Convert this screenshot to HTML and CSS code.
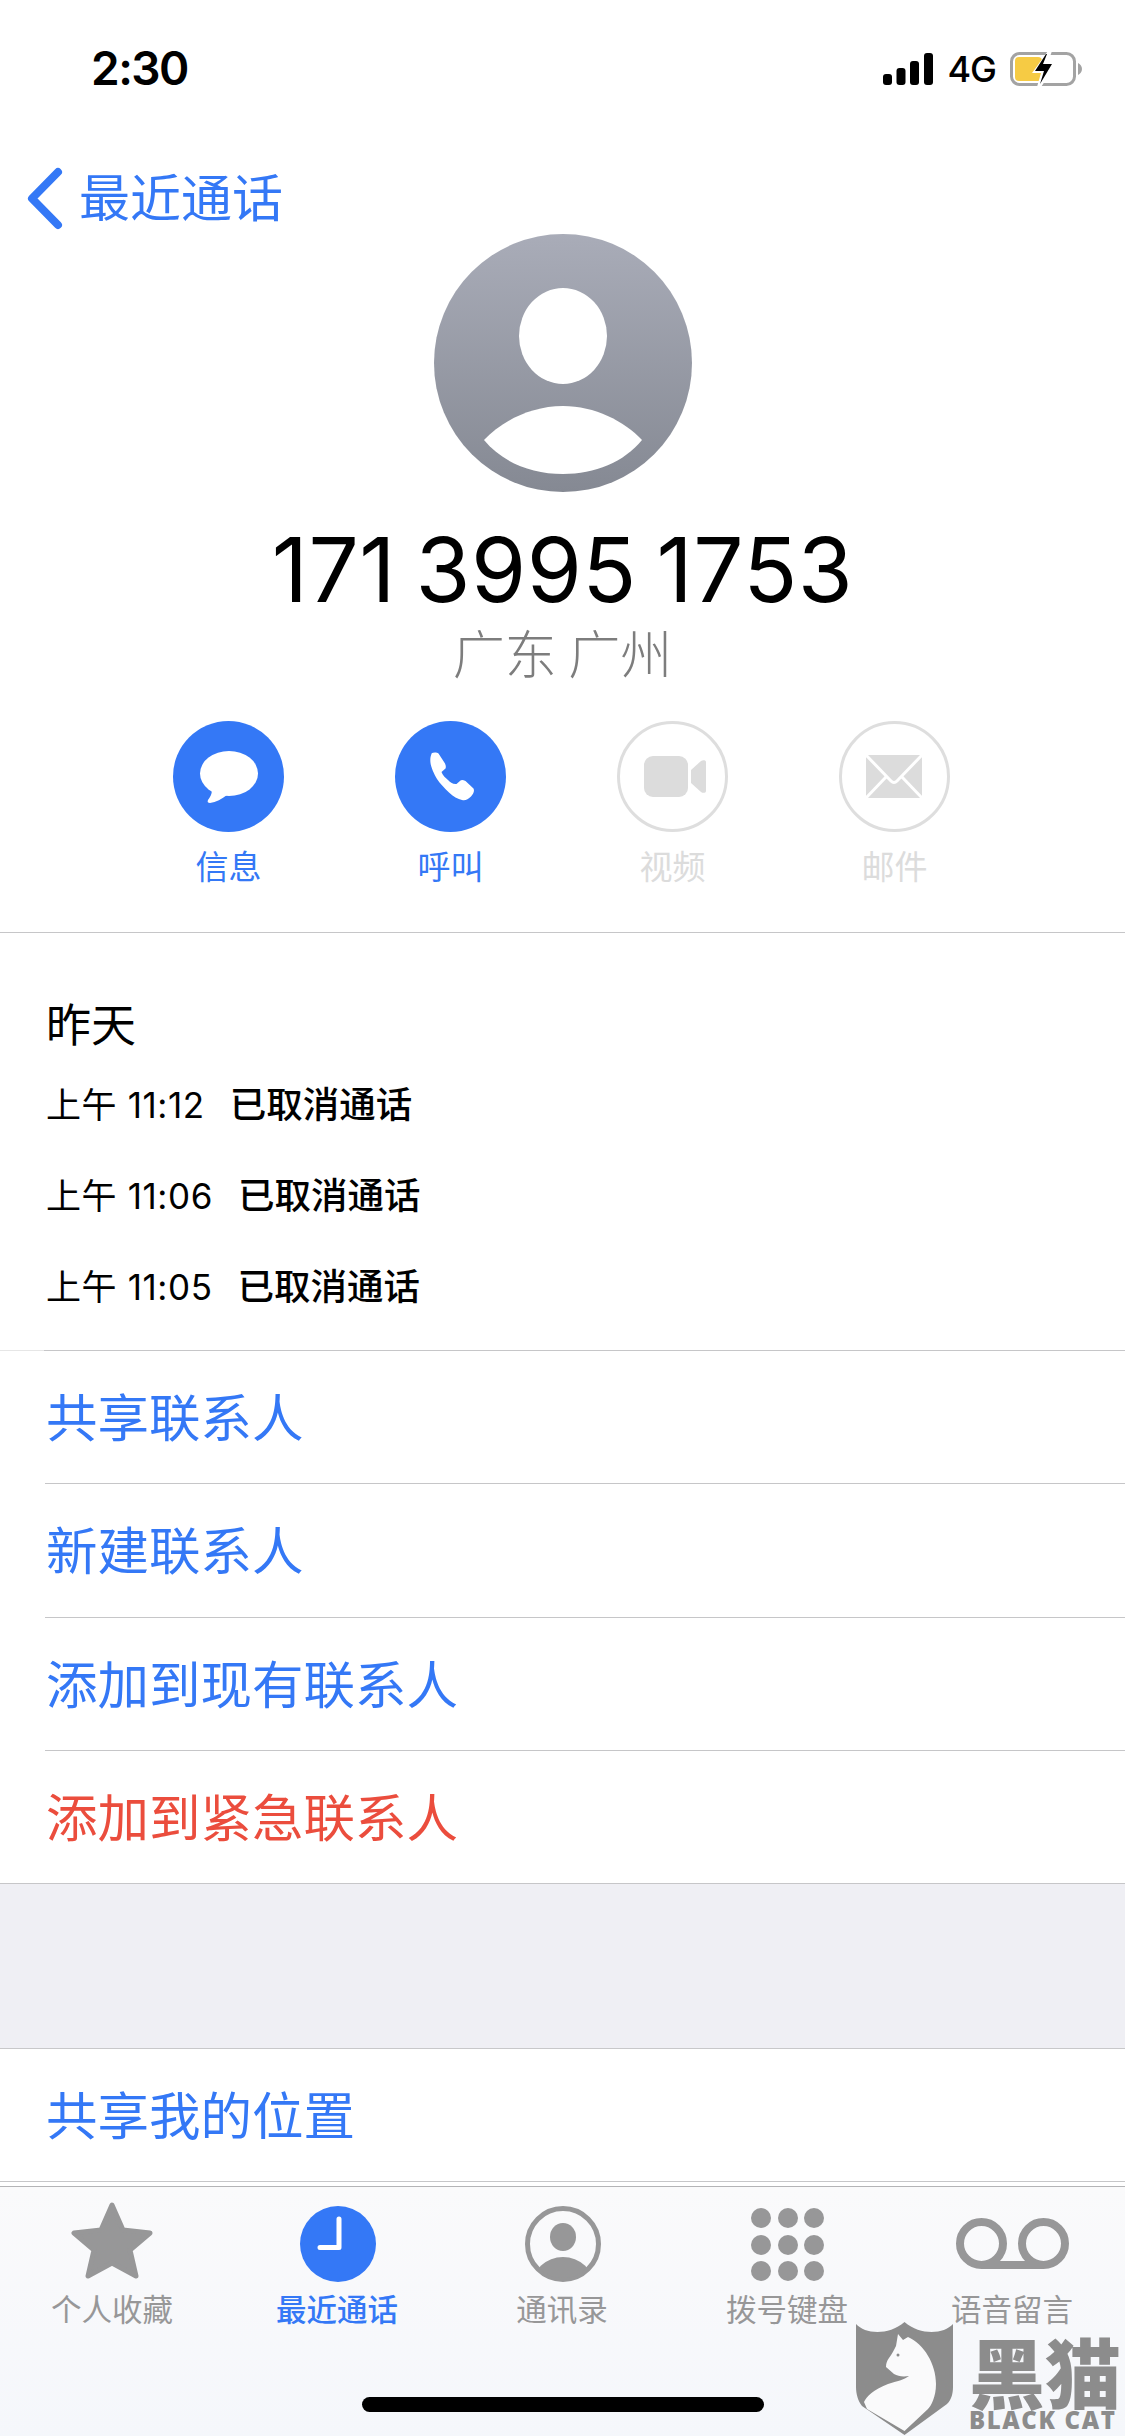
FILE: index.html
```html
<!DOCTYPE html>
<html lang="zh-CN">
<head>
    <meta charset="UTF-8">
    <meta name="viewport" content="width=device-width, initial-scale=1.0">
    <title>最近通话</title>
    <link rel="stylesheet" href="styles.css">
</head>
<body>
    <div class="phone">
        <div class="status">
            <span class="time">2:30</span>
            <div class="status-right">
                <svg class="signal" width="50" height="32" viewBox="0 0 50 32">
                    <rect x="0" y="21" width="9" height="11" rx="3"/>
                    <rect x="13.5" y="15" width="9" height="17" rx="3"/>
                    <rect x="27" y="8" width="9" height="24" rx="3"/>
                    <rect x="41" y="0" width="9" height="32" rx="3"/>
                </svg>
                <span class="net">4G</span>
                <svg class="battery" width="72" height="34" viewBox="0 0 72 34">
                    <rect x="1.5" y="1.5" width="63" height="31" rx="8" fill="none" stroke="#a3a3a3" stroke-width="3"/>
                    <rect x="5" y="5" width="27" height="24" rx="4" fill="#f6cb44"/>
                    <path d="M68 11c2 1 4 3 4 6s-2 5-4 6z" fill="#a3a3a3"/>
                    <path d="M38 -1L22 21h9l-4 14h4l15-22h-9l5-14z" fill="#fff"/>
                    <path d="M36 2L25 19h9l-4 13 12-20h-9l4-10z" fill="#000"/>
                </svg>
            </div>
        </div>

        <div class="nav">
            <svg class="chevron" width="37" height="63" viewBox="0 0 37 63">
                <path d="M32 5L6 31.5 32 58" fill="none" stroke="#3478f6" stroke-width="8" stroke-linecap="round" stroke-linejoin="round"/>
            </svg>
            <span class="nav-label">最近通话</span>
        </div>

        <div class="profile">
            <svg class="avatar" width="258" height="258" viewBox="0 0 258 258">
                <defs>
                    <linearGradient id="avatarBg" x1="0" y1="0" x2="0" y2="1">
                        <stop offset="0" stop-color="#a9acb8"/>
                        <stop offset="1" stop-color="#858993"/>
                    </linearGradient>
                </defs>
                <circle cx="129" cy="129" r="129" fill="url(#avatarBg)"/>
                <ellipse cx="129" cy="102" rx="44" ry="48" fill="#fff"/>
                <path d="M50 206C68 187 97 172 129 172s61 15 79 34c-18 22-47 34-79 34S68 228 50 206z" fill="#fff"/>
            </svg>
            <div class="number">171 3995 1753</div>
            <div class="region">广东 广州</div>
            <div class="actions">
                <div class="action">
                    <svg class="action-icon" width="111" height="111" viewBox="0 0 111 111">
                        <circle cx="55.5" cy="55.5" r="55.5" fill="#3478f6"/>
                        <ellipse cx="56" cy="52.5" rx="29" ry="22.5" fill="#fff"/>
                        <path d="M38 66c2 5 0 9-3 13-1 2 0 3 2 3 6-1 12-4 17-8z" fill="#fff"/>
                    </svg>
                    <span>信息</span>
                </div>
                <div class="action">
                    <svg class="action-icon" width="111" height="111" viewBox="0 0 111 111">
                        <circle cx="55.5" cy="55.5" r="55.5" fill="#3478f6"/>
                        <path d="M36 32.5c3-1.500 6-1 7.500 0L50 42.500c1 2 1 4 .5 5l-4 3.500c1 3 4 6 6.500 8 2 2 5 4.500 8.500 4l4-3.500c1-1 3-.5 5 .5l8 7.500c1 2 .5 5-2.500 8-3 3-6 4.500-9 3.500-4-1-9-3.500-13-7.500-4.500-4.500-9-9-12-13.500-3-5-6-12-6.500-16-.5-4 0-7.500 1.500-10z" fill="#fff"/>
                    </svg>
                    <span>呼叫</span>
                </div>
                <div class="action off">
                    <svg class="action-icon" width="111" height="111" viewBox="0 0 111 111">
                        <circle cx="55.5" cy="55.5" r="54" fill="#fff" stroke="#dedede" stroke-width="3"/>
                        <rect x="27" y="35" width="44" height="41" rx="9" fill="#dcdcdc"/>
                        <path d="M74 49l10-9c2-1.500 5-1 5 1v29c0 2-3 2.500-5 1l-10-9z" fill="#dcdcdc"/>
                    </svg>
                    <span>视频</span>
                </div>
                <div class="action off">
                    <svg class="action-icon" width="111" height="111" viewBox="0 0 111 111">
                        <circle cx="55.500" cy="55.500" r="54" fill="#fff" stroke="#dedede" stroke-width="3"/>
                        <rect x="27" y="34" width="56" height="43" rx="2" fill="#dcdcdc"/>
                        <path d="M26 33l26 27c2 2 4 2 6 0l26-27M26 78l21-22M84 78L63 56" fill="none" stroke="#fff" stroke-width="3"/>
                    </svg>
                    <span>邮件</span>
                </div>
            </div>
        </div>

        <div class="history">
            <div class="history-day">昨天</div>
            <div class="call"><span class="call-time">上午 11:12</span><span class="call-state">已取消通话</span></div>
            <div class="call"><span class="call-time">上午 11:06</span><span class="call-state">已取消通话</span></div>
            <div class="call"><span class="call-time">上午 11:05</span><span class="call-state">已取消通话</span></div>
        </div>

        <div class="row">共享联系人</div>
        <div class="row">新建联系人</div>
        <div class="row">添加到现有联系人</div>
        <div class="row danger">添加到紧急联系人</div>
        <div class="gap"></div>
        <div class="row last">共享我的位置</div>
        <div class="peek"></div>

        <div class="tabbar">
            <div class="tab">
                <div class="tab-icon">
                    <svg width="82" height="77" viewBox="0 0 82 77">
                        <path d="M41 3L52 28 79 31 59 48 65 74 41 61 17 74 23 48 3 31 30 28z" fill="#979798" stroke="#979798" stroke-width="5" stroke-linejoin="round"/>
                    </svg>
                </div>
                <span>个人收藏</span>
            </div>
            <div class="tab on">
                <div class="tab-icon">
                    <svg width="76" height="76" viewBox="0 0 76 76">
                        <circle cx="38" cy="38" r="38" fill="#3478f6"/>
                        <path d="M39 13V41.500H20" fill="none" stroke="#fff" stroke-width="5" stroke-linecap="round" stroke-linejoin="round"/>
                    </svg>
                </div>
                <span>最近通话</span>
            </div>
            <div class="tab">
                <div class="tab-icon">
                    <svg width="76" height="76" viewBox="0 0 76 76">
                        <defs>
                            <clipPath id="ringClip"><circle cx="38" cy="38" r="34"/></clipPath>
                        </defs>
                        <circle cx="38" cy="38" r="35.500" fill="none" stroke="#979798" stroke-width="5"/>
                        <ellipse cx="38" cy="31" rx="13" ry="14" fill="#979798"/>
                        <ellipse cx="38" cy="80" rx="31" ry="29" fill="#979798" clip-path="url(#ringClip)"/>
                    </svg>
                </div>
                <span>通讯录</span>
            </div>
            <div class="tab">
                <div class="tab-icon">
                    <div class="keypad">
                        <i></i><i></i><i></i>
                        <i></i><i></i><i></i>
                        <i></i><i></i><i></i>
                    </div>
                </div>
                <span>拨号键盘</span>
            </div>
            <div class="tab">
                <div class="tab-icon">
                    <svg width="113" height="51" viewBox="0 0 113 51">
                        <circle cx="25.500" cy="25.500" r="21.500" fill="none" stroke="#979798" stroke-width="8"/>
                        <circle cx="87.500" cy="25.500" r="21.500" fill="none" stroke="#979798" stroke-width="8"/>
                        <path d="M25.500 47H87.500" stroke="#979798" stroke-width="8"/>
                    </svg>
                </div>
                <span>语音留言</span>
            </div>
            <div class="home-bar"></div>
        </div>

        <!-- watermark sits over the tab bar -->
        <div class="mark">
            <svg class="mark-shield" width="97" height="114" viewBox="0 0 97 114">
                <path d="M0 2C9 12 32 14 48.500 0 65 14 88 12 97 2V65C97 72 95 78 91 82L48.500 113 6 84C2 79 0 72 0 65z" fill="#8c8c8c"/>
                <path d="M42 12L47 18 52 15C68 22 80 42 80 62 80 75 75 84 72 87L48.500 109 11 87 8 80C11 74 17 68 32 62 41 59 48 58 53 54 46 55 42 54 38 52L30 45C30 41 31 39 33 36 36 32 38 28 40 24z" fill="#fafafb"/>
                <circle cx="42" cy="33" r="1.500" fill="#8c8c8c"/>
            </svg>
            <div class="mark-text">
                <div class="mark-cn">黑猫</div>
                <div class="mark-en">BLACK CAT</div>
            </div>
        </div>
    </div>
</body>
</html>
```

FILE: styles.css
```css
* {
    box-sizing: border-box;
}
body {
    margin: 0;
    background: #fff;
    font-family: "Noto Sans CJK SC", "Liberation Sans", sans-serif;
}
.phone {
    position: relative;
    width: 1125px;
    height: 2436px;
    overflow: hidden;
    background: #fff;
    display: flex;
    flex-direction: column;
}

/* status bar */
.status {
    height: 136px;
    padding: 46px 43px 0 91px;
    display: flex;
    justify-content: space-between;
    align-items: flex-start;
}
.time {
    font-family: Inter, "Liberation Sans", sans-serif;
    font-size: 46px;
    font-weight: 600;
    line-height: 44px;
    letter-spacing: -1.5px;
    color: #000;
}
.status-right {
    display: flex;
    align-items: center;
    gap: 14px;
    margin-top: 6px;
}
.net {
    font-family: Inter, "Liberation Sans", sans-serif;
    font-size: 36px;
    font-weight: 500;
    line-height: 32px;
    letter-spacing: -1px;
}

/* nav */
.nav {
    height: 98px;
    padding: 31px 0 0 26px;
    display: flex;
    align-items: flex-start;
    gap: 16px;
}
.nav-label {
    font-size: 51px;
    line-height: 57px;
    color: #3478f6;
}

/* contact header */
.profile {
    height: 699px;
    border-bottom: 1px solid #c6c6c8;
    display: flex;
    flex-direction: column;
    align-items: center;
}
.avatar {
    display: block;
}
.number {
    margin-top: 33px;
    font-family: Inter, "Liberation Sans", sans-serif;
    font-size: 89px;
    line-height: 90px;
    letter-spacing: 0.5px;
    word-spacing: -6px;
    color: #000;
}
.region {
    margin-top: 7px;
    font-size: 52px;
    font-weight: 300;
    line-height: 60px;
    color: #7d7d7d;
}
.actions {
    margin-top: 39px;
    margin-left: -2px;
    display: flex;
    gap: 111px;
}
.action {
    width: 111px;
    display: flex;
    flex-direction: column;
    align-items: center;
    gap: 13px;
    font-size: 33px;
    line-height: 40px;
    color: #3478f6;
}
.action.off {
    color: #dcdcdc;
}
.action-icon {
    display: block;
}

/* call history */
.history {
    height: 418px;
    padding: 60px 0 0 46px;
    border-bottom: 1px solid;
    border-image: linear-gradient(to right, #e6e6e6 45px, #c6c6c8 45px) 1;
}
.history-day {
    font-size: 45px;
    line-height: 60px;
    color: #000;
    margin-bottom: 4px;
}
.call {
    height: 91px;
    display: flex;
    align-items: center;
    gap: 25px;
    color: #000;
}
.call-time {
    font-family: Inter, "Noto Sans CJK SC", sans-serif;
    font-size: 35px;
    letter-spacing: 0.6px;
}
.call-state {
    font-size: 36.5px;
    font-weight: 500;
}

/* action rows */
.row {
    height: 133.25px;
    margin-left: 45px;
    padding: 0 0 5px 1px;
    display: flex;
    align-items: center;
    font-size: 51.5px;
    color: #3478f6;
    border-bottom: 1px solid #c6c6c8;
    flex-shrink: 0;
}
.row.danger,
.row.last {
    margin-left: 0;
    padding-left: 46px;
}
.row.danger {
    color: #eb4d3d;
}
.gap {
    height: 165px;
    background: #efeff4;
    border-bottom: 1px solid #c8c8ca;
    flex-shrink: 0;
}
.peek {
    flex: 1;
    background: #fff;
}

/* tab bar */
.tabbar {
    position: relative;
    height: 250px;
    flex-shrink: 0;
    border-top: 1px solid #b4b4b6;
    background: linear-gradient(#fafafb, #f5f7fb);
    display: grid;
    grid-template-columns: repeat(5, 225px);
}
.tab {
    display: flex;
    flex-direction: column;
    align-items: center;
    font-size: 30.5px;
    color: #979798;
}
.tab span {
    display: block;
    line-height: 32px;
    margin-left: -1px;
}
.tab.on {
    color: #3478f6;
    font-weight: 500;
}
.tab-icon {
    height: 105px;
    padding-top: 15px;
    display: flex;
    align-items: flex-start;
    justify-content: center;
}
.tab:nth-child(1) .tab-icon {
    padding-top: 15px;
    margin-left: -2px;
}
.tab:nth-child(2) .tab-icon,
.tab:nth-child(3) .tab-icon {
    padding-top: 19px;
}
.tab:nth-child(4) .tab-icon {
    padding-top: 21px;
}
.tab:nth-child(5) .tab-icon {
    padding-top: 31px;
}
.keypad {
    display: grid;
    grid-template-columns: repeat(3, 20px);
    grid-auto-rows: 20px;
    gap: 6.5px;
}
.keypad i {
    background: #979798;
    border-radius: 50%;
}
.home-bar {
    position: absolute;
    left: 362px;
    top: 210px;
    width: 402px;
    height: 15px;
    border-radius: 8px;
    background: #000;
}

/* watermark */
.mark {
    position: absolute;
    left: 856px;
    top: 2322px;
    display: flex;
    gap: 16px;
}
.mark-shield {
    display: block;
}
.mark-text {
    color: #8c8c8c;
    width: 156px;
}
.mark-cn {
    font-size: 76px;
    font-weight: 900;
    line-height: 70px;
    margin-top: 13px;
    white-space: nowrap;
}
.mark-en {
    font-family: "Open Sans", "Liberation Sans", sans-serif;
    font-size: 24px;
    font-weight: 800;
    line-height: 20px;
    letter-spacing: 1.6px;
    margin-top: 5px;
    white-space: nowrap;
}
```
